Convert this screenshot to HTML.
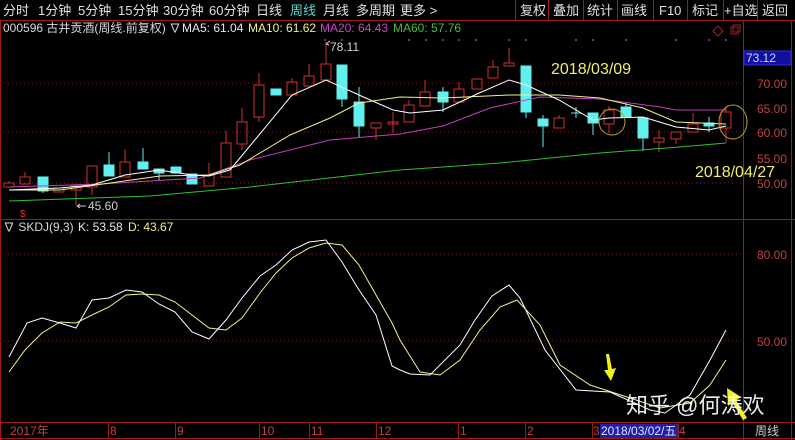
<!DOCTYPE html>
<html><head><meta charset="utf-8"><style>
html,body{margin:0;padding:0;background:#000;}
svg{display:block;font-family:"Liberation Sans","Noto Sans CJK SC",sans-serif;}
</style></head><body>
<svg width="795" height="440" viewBox="0 0 795 440" xmlns="http://www.w3.org/2000/svg">
<rect width="795" height="440" fill="#000"/>
<g font-size="13" fill="#e0e0e0">
<text x="3" y="15">分时</text><text x="38" y="15">1分钟</text><text x="78" y="15">5分钟</text><text x="118" y="15">15分钟</text><text x="163" y="15">30分钟</text><text x="209" y="15">60分钟</text><text x="256" y="15">日线</text><text x="290" y="15" fill="#5fd7d7">周线</text><text x="323" y="15">月线</text><text x="356" y="15">多周期</text><text x="400" y="15">更多 &gt;</text>
<text x="520" y="15">复权</text><text x="553" y="15">叠加</text><text x="587" y="15">统计</text><text x="621" y="15">画线</text><text x="659" y="15">F10</text><text x="692" y="15">标记</text><text x="724" y="15">+自选</text><text x="762" y="15">返回</text>
</g>
<g stroke="#a01818" stroke-width="1">
<line x1="0" y1="20.5" x2="795" y2="20.5"/>
<line x1="515.5" y1="0" x2="515.5" y2="20"/><line x1="548.5" y1="0" x2="548.5" y2="20"/><line x1="583.5" y1="0" x2="583.5" y2="20"/><line x1="617.5" y1="0" x2="617.5" y2="20"/><line x1="653.5" y1="0" x2="653.5" y2="20"/><line x1="687.5" y1="0" x2="687.5" y2="20"/><line x1="723.5" y1="0" x2="723.5" y2="20"/><line x1="757.5" y1="0" x2="757.5" y2="20"/>
<line x1="743.5" y1="21" x2="743.5" y2="440"/>
<line x1="791.5" y1="21" x2="791.5" y2="440"/>
<line x1="0" y1="219.5" x2="795" y2="219.5"/>
<line x1="0" y1="422.5" x2="795" y2="422.5"/>
<line x1="0" y1="438.5" x2="795" y2="438.5"/>
<line x1="0.5" y1="21" x2="0.5" y2="440"/>
</g>
<g font-size="12">
<text x="3" y="32" fill="#d8d8d8">000596 古井贡酒(周线.前复权) ∇</text>
<text x="182" y="32" fill="#e8e8e8">MA5: 61.04</text>
<text x="248" y="32" fill="#f0f080">MA10: 61.62</text>
<text x="320" y="32" fill="#d040d0">MA20: 64.43</text>
<text x="393" y="32" fill="#40c040">MA60: 57.76</text>
</g>
<path d="M718 26 l5 5 -5 5 -5 -5z" fill="none" stroke="#a02020"/>
<rect x="731" y="27" width="7" height="7" fill="none" stroke="#a02020"/><rect x="733" y="25" width="7" height="7" fill="none" stroke="#a02020"/>
<g fill="#a040a0"><circle cx="325" cy="40" r="1"/><circle cx="342" cy="40" r="1"/><circle cx="409" cy="40" r="1"/><circle cx="426" cy="40" r="1"/><circle cx="443" cy="40" r="1"/><circle cx="459" cy="40" r="1"/><circle cx="476" cy="40" r="1"/><circle cx="509" cy="40" r="1"/><circle cx="526" cy="40" r="1"/><circle cx="576" cy="40" r="1"/><circle cx="593" cy="40" r="1"/><circle cx="626" cy="40" r="1"/><circle cx="676" cy="40" r="1"/><circle cx="709" cy="40" r="1"/><circle cx="726" cy="40" r="1"/></g>
<g stroke="#801818" stroke-dasharray="1,3">
<line x1="0" y1="83" x2="743" y2="83"/><line x1="0" y1="132" x2="743" y2="132"/><line x1="0" y1="183" x2="743" y2="183"/>
<line x1="0" y1="254" x2="743" y2="254"/><line x1="0" y1="341" x2="743" y2="341"/>
</g>
<g font-size="12" fill="#c04040">
<text x="757" y="88">70.00</text><text x="757" y="113">65.00</text><text x="757" y="137">60.00</text><text x="757" y="163">55.00</text><text x="757" y="188">50.00</text>
<text x="757" y="259">80.00</text><text x="757" y="346">50.00</text>
</g>
<rect x="744" y="51" width="47" height="14" fill="#1010a0" stroke="#3030d0"/>
<text x="746" y="62" font-size="12" fill="#d0d0ff">73.12</text>
<g stroke="#d03030" fill="none" stroke-width="1">
<path d="M9 181V183M25 172V177M76 186V205M92 187V195M125 149V162M209 163V175M226 131V143M242 108V122M242 144V150M259 73V85M259 117V122M292 78V82M309 64V76M326 42V64M376 128V140M393 112V133M409 100V105M425 80V92M459 82V89M493 60V67M509 48V63M559 115V118M609 106V110M609 124V133M659 130V138M659 142V152M676 139V144M693 113V124M726 107V112M726 128V142"/>
<rect x="4" y="183" width="10" height="4"/><rect x="20" y="177" width="10" height="7"/><rect x="54" y="188" width="10" height="4"/><rect x="71" y="186" width="10" height="4"/><rect x="87" y="166" width="10" height="21"/><rect x="120" y="162" width="10" height="15"/><rect x="204" y="175" width="10" height="11"/><rect x="221" y="143" width="10" height="34"/><rect x="237" y="122" width="10" height="22"/><rect x="254" y="85" width="10" height="32"/><rect x="287" y="82" width="10" height="13"/><rect x="304" y="76" width="10" height="10"/><rect x="321" y="64" width="10" height="16"/><rect x="371" y="123" width="10" height="5"/><rect x="388" y="122" width="10" height="2"/><rect x="404" y="105" width="10" height="17"/><rect x="420" y="92" width="10" height="14"/><rect x="454" y="89" width="10" height="13"/><rect x="472" y="79" width="10" height="10"/><rect x="488" y="67" width="10" height="11"/><rect x="504" y="63" width="10" height="3"/><rect x="554" y="118" width="10" height="10"/><rect x="604" y="110" width="10" height="14"/><rect x="654" y="138" width="10" height="4"/><rect x="671" y="132" width="10" height="7"/><rect x="688" y="124" width="10" height="8"/><rect x="721" y="112" width="10" height="16"/>
</g>
<g stroke="#60f0f0" fill="#60f0f0">
<path d="M43 191V193M109 152V165M143 148V162M159 173V180M342 99V107M359 87V102M359 126V137M443 87V92M443 102V112M526 112V118M543 115V119M543 126V147M576 107V118M593 123V135M626 103V107M643 138V151M709 117V132M571 113H581" fill="none"/>
<rect x="38" y="177" width="10" height="14"/><rect x="104" y="165" width="10" height="11"/><rect x="138" y="162" width="10" height="7"/><rect x="154" y="169" width="10" height="4"/><rect x="171" y="167" width="10" height="6"/><rect x="187" y="174" width="10" height="10"/><rect x="271" y="89" width="10" height="6"/><rect x="337" y="65" width="10" height="34"/><rect x="354" y="102" width="10" height="24"/><rect x="438" y="92" width="10" height="10"/><rect x="521" y="66" width="10" height="46"/><rect x="538" y="119" width="10" height="7"/><rect x="588" y="113" width="10" height="10"/><rect x="621" y="107" width="10" height="10"/><rect x="638" y="118" width="10" height="20"/><rect x="704" y="123" width="10" height="3"/>
</g>
<g fill="none" stroke-width="1">
<polyline stroke="#30c030" points="9,201 150,196 250,187 400,170 500,163 600,153 680,147 726,143"/>
<polyline stroke="#c040c0" points="9,187 100,184 200,178 250,160 330,140 400,134 443,126 490,108 540,97 600,99 660,107 676,110 726,110"/>
<polyline stroke="#f0f090" points="9,190 60,190 110,183 160,176 209,175 240,165 290,135 330,118 359,103 400,97 443,98 509,95 559,95 600,98 643,108 676,122 726,124"/>
<polyline stroke="#ffffff" points="9,190 60,188 92,185 125,175 159,170 192,175 209,176 230,170 259,135 292,95 326,80 359,95 393,110 410,113 443,110 477,94 509,80 526,85 559,100 593,120 609,118 643,117 676,127 709,130 726,126"/>
</g>
<ellipse cx="612" cy="122" rx="13" ry="13" fill="none" stroke="#b0a030"/>
<ellipse cx="733" cy="122" rx="14" ry="17" fill="none" stroke="#b0a030"/>
<text x="330" y="51" font-size="12" fill="#d0d0d0">78.11</text>
<path d="M326 44 l4 -3 M326 44 l3 1" stroke="#d0d0d0" fill="none"/>
<text x="88" y="210" font-size="12" fill="#d0d0d0">45.60</text>
<path d="M77 206 h9 M77 206 l3 -2 M77 206 l3 2" stroke="#d0d0d0" fill="none"/>
<text x="20" y="217" font-size="10" fill="#e03030">$</text>
<text x="551" y="74" font-size="16" fill="#f0f060">2018/03/09</text>
<text x="695" y="177" font-size="16" fill="#f0f060">2018/04/27</text>
<text x="3" y="231" font-size="12" fill="#d8d8d8">∇ SKDJ(9,3)</text>
<text x="78" y="231" font-size="12" fill="#e8e8e8">K: 53.58</text>
<text x="128" y="231" font-size="12" fill="#f0f080">D: 43.67</text>
<polyline fill="none" stroke="#f0f090" points="9,372 25,350 42,333 60,322 76,323 92,315 109,307 126,295 142,294 159,295 175,302 192,315 209,328 226,330 242,318 260,293 276,273 292,258 309,248 326,243 342,245 359,265 376,295 392,323 400,340 420,372 440,375 460,360 480,330 500,307 517,300 540,325 560,365 590,385 630,398 660,408 690,403 710,385 726,360"/>
<polyline fill="none" stroke="#ffffff" points="9,357 27,323 42,318 60,323 76,328 92,300 109,298 126,290 142,292 159,304 175,312 192,332 209,339 226,320 242,298 260,276 276,265 292,250 309,242 326,240 342,262 359,290 376,315 392,366 400,370 410,374 430,375 460,345 475,320 492,296 509,285 520,298 545,350 576,390 610,392 650,410 665,413 690,395 710,360 726,330"/>
<path d="M606 354 L609 354 L612 369 L616 368 L611 381 L604 370 L608 370 Z" fill="#f0f020"/>
<path d="M727 388 L741 397 L736 400 L747 418 L743 420 L732 402 L728 406 Z" fill="#f0f020"/>
<text x="626" y="413" font-size="22" fill="#ffffff" fill-opacity="0.92">知乎 @何涛欢</text>
<g stroke="#a01818">
<path d="M108.5 423V438M175.5 423V438M259.5 423V438M309.5 423V438M376.5 423V438M458.5 423V438M525.5 423V438M592.5 423V438M678.5 423V438"/>
</g>
<g font-size="12" fill="#c04040">
<text x="10" y="435">2017年</text><text x="110" y="435">8</text><text x="177" y="435">9</text><text x="261" y="435">10</text><text x="311" y="435">11</text><text x="378" y="435">12</text><text x="460" y="435">1</text><text x="527" y="435">2</text><text x="593" y="435">3</text><text x="679" y="435">4</text>
</g>
<rect x="600" y="424" width="78" height="14" fill="#2020a0"/>
<text x="601" y="435" font-size="12" fill="#e0e0ff">2018/03/02/五</text>
<text x="755" y="435" font-size="12" fill="#d0d0d0">周线</text>
</svg>
</body></html>
